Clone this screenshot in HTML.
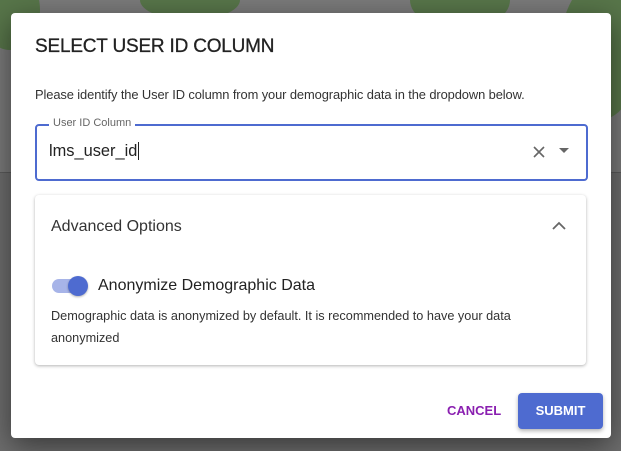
<!DOCTYPE html><html><head><style>
body{margin:0;width:621px;height:451px;overflow:hidden;background:#6e6e6e;font-family:"Liberation Sans",sans-serif;position:relative}
.bg{position:absolute;left:0;top:0;width:621px;height:172px;background:#7b7b7b;border-bottom:1px solid #5c5c5c}
.blob{position:absolute;border-radius:50%;background:#58764a}
.dlg{position:absolute;left:11px;top:13px;width:600px;height:425px;background:#fff;border-radius:4px;box-shadow:0 8px 30px rgba(0,0,0,.5)}
.t{position:absolute;left:24px;top:23px;font-size:19px;color:#222;letter-spacing:-0.2px;-webkit-text-stroke:0.3px #222}
.p{position:absolute;left:24px;top:74px;font-size:12.9px;color:#333;letter-spacing:-0.1px;white-space:nowrap}
.fld{position:absolute;left:24px;top:111px;width:549px;height:53px;border:2px solid #4e6bd0;border-radius:4px}
.lab{position:absolute;left:12px;top:-9px;background:#fff;padding:0 4px;font-size:11px;color:#666}
.val{position:absolute;left:12px;top:16px;font-size:16.4px;color:#222}
.card{position:absolute;left:24px;top:182px;width:551px;height:170px;border-radius:4px;box-shadow:0 1px 3px rgba(0,0,0,.3)}
.btn{position:absolute;font-size:13px;font-weight:bold}
</style></head><body>
<div class="bg"></div>
<div class="blob" style="left:-20px;top:-30px;width:60px;height:80px"></div>
<div class="blob" style="left:140px;top:-20px;width:100px;height:40px"></div>
<div class="blob" style="left:410px;top:-30px;width:100px;height:60px"></div>
<div class="blob" style="left:560px;top:-20px;width:80px;height:140px"></div>
<div class="dlg">
<div class="t">SELECT USER ID COLUMN</div>
<div class="p">Please identify the User ID column from your demographic data in the dropdown below.</div>
<div class="fld"><div class="lab">User ID Column</div><div class="val">lms_user_id<span style="border-left:1px solid #222;margin-left:1px"></span></div>
<svg style="position:absolute;left:494px;top:18px" width="16" height="16" viewBox="0 0 16 16"><path d="M3 3L13 13M13 3L3 13" stroke="#666" stroke-width="1.6"/></svg>
<svg style="position:absolute;left:522px;top:22px" width="10" height="6"><path d="M0 0H10L5 5Z" fill="#666"/></svg>
</div>
<div class="card">
<div style="position:absolute;left:16px;top:23px;font-size:16px;color:#333">Advanced Options</div>
<svg style="position:absolute;left:517px;top:26px" width="14" height="9"><path d="M1 8L7 2L13 8" stroke="#666" stroke-width="1.8" fill="none"/></svg>
<div style="position:absolute;left:17px;top:84px;width:30px;height:14px;border-radius:7px;background:#a7b4e8"></div>
<div style="position:absolute;left:33px;top:81px;width:20px;height:20px;border-radius:50%;background:#4e6bd0;box-shadow:0 1px 2px rgba(0,0,0,.3)"></div>
<div style="position:absolute;left:63px;top:82px;font-size:16px;color:#222">Anonymize Demographic Data</div>
<div style="position:absolute;left:16px;top:110px;width:500px;font-size:12.7px;color:#333;line-height:22px">Demographic data is anonymized by default. It is recommended to have your data anonymized</div>
</div>
<div class="btn" style="left:436px;top:390px;color:#8a1fb0">CANCEL</div>
<div class="btn" style="left:507px;top:380px;width:85px;height:36px;background:#4e6bd0;color:#fff;border-radius:4px;line-height:36px;text-align:center;box-shadow:0 2px 4px rgba(0,0,0,.3)">SUBMIT</div>
</div>
</body></html>
